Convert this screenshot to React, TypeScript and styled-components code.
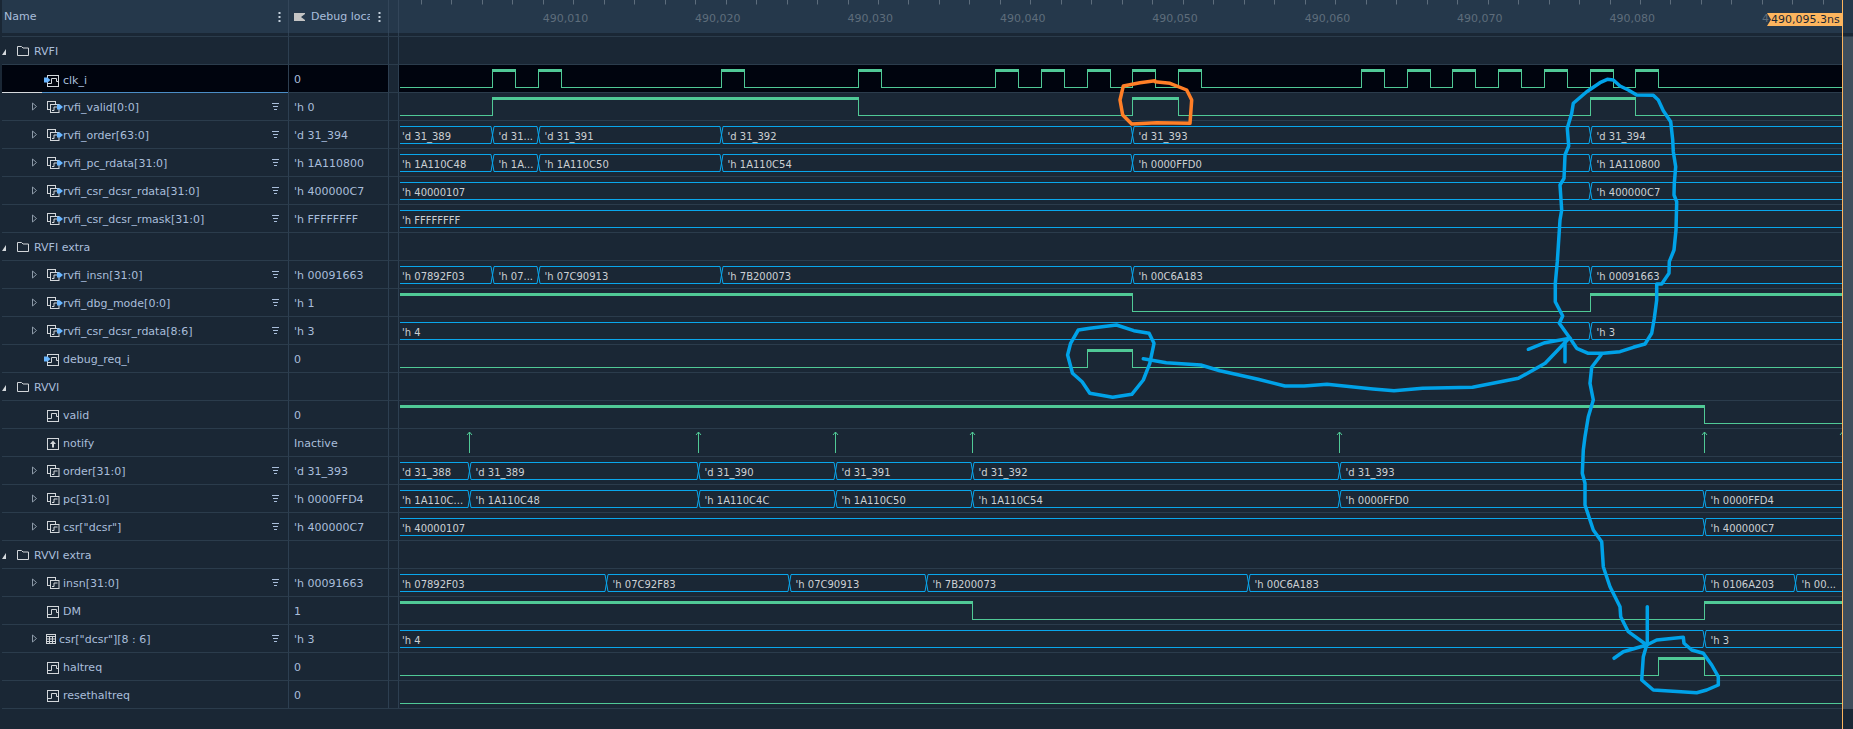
import styled, { createGlobalStyle } from "styled-components";

const GlobalStyle = createGlobalStyle`
  html, body {
    margin: 0;
    padding: 0;
    background: #1a2735;
    overflow: hidden;
  }
`;

const LINE = "#2b3c4c";
const COL = "#2d3f51";
const GREEN = "#50c996";
const BUS = "#09a6ec";
const SCRIBBLE = "#00a2e8";

const Page = styled.div`
  position: relative;
  width: 1853px;
  height: 729px;
  overflow: hidden;
  padding-left: 2px;
  box-sizing: border-box;
  background: #1a2735;
  font-family: "DejaVu Sans", sans-serif;
  font-size: 11px;
  color: #a9bedb;
`;

const Header = styled.div`
  display: flex;
  height: 33px;
  background: #25384b;
`;

const HeaderCell = styled.div<{ $w: number }>`
  display: flex;
  align-items: center;
  flex: none;
  width: ${(p) => p.$w}px;
  box-sizing: border-box;
  border-right: 1px solid #33465a;
`;

const HeaderTitle = styled.span`
  flex: 1;
  padding-left: 2px;
`;

const DebugFlag = styled.svg`
  flex: none;
  margin-left: 5px;
`;

const DebugTitle = styled.span`
  width: 59px;
  margin-left: 6px;
  overflow: hidden;
  white-space: nowrap;
`;

const KebabIcon = styled.svg`
  flex: none;
  margin-left: auto;
  margin-right: 7px;
`;

const Ruler = styled.svg`
  display: block;
  flex: none;
`;

const RulerLabel = styled.text`
  font-family: "DejaVu Sans", sans-serif;
  font-size: 11px;
  fill: #5e6d7b;
`;

const Body = styled.div`
  display: flex;
`;

const Rows = styled.div`
  flex: none;
  width: 1841px;
`;

const ScrollStrip = styled.div`
  flex: none;
  width: 10px;
  height: 672px;
  background: #3f4e5c;
`;

const Row = styled.div<{ $h?: number }>`
  display: flex;
  height: ${(p) => p.$h ?? 28}px;
`;

const NameCell = styled.div<{ $selected?: boolean }>`
  display: flex;
  align-items: center;
  flex: none;
  width: 287px;
  box-sizing: border-box;
  border-right: 1px solid ${COL};
  border-bottom: ${(p) => (p.$selected ? "none" : `1px solid ${LINE}`)};
  background: ${(p) =>
    p.$selected
      ? "linear-gradient(to right, #d6dade 40px, #4b8dc6 40px) bottom / 100% 1px no-repeat, #00040e"
      : "none"};
`;

const ValueCell = styled.div<{ $selected?: boolean }>`
  display: flex;
  align-items: center;
  flex: none;
  width: 100px;
  box-sizing: border-box;
  padding: 2px 0 0 5px;
  border-right: 1px solid ${COL};
  border-bottom: 1px solid ${LINE};
  background: ${(p) => (p.$selected ? "#00040e" : "none")};
  white-space: nowrap;
`;

const GapCell = styled.div`
  flex: none;
  width: 10px;
  box-sizing: border-box;
  border-right: 1px solid ${COL};
  border-bottom: 1px solid ${LINE};
`;

const WaveCell = styled.div<{ $selected?: boolean }>`
  flex: 1;
  box-sizing: border-box;
  border-bottom: 1px solid ${LINE};
  background: ${(p) => (p.$selected ? "#00040e" : "none")};
`;

const WaveSvg = styled.svg`
  display: block;
`;

const BusLabel = styled.text`
  font-family: "DejaVu Sans", sans-serif;
  font-size: 10px;
  fill: #ccd0d4;
`;

const GroupName = styled.span`
  margin-left: 5px;
  padding-top: 2px;
`;

const Caret = styled.svg`
  flex: none;
  margin: 3px 11px 0 0;
`;

const Folder = styled.svg`
  flex: none;
`;

const Chevron = styled.svg`
  flex: none;
  margin-left: 30px;
`;

const SignalIcon = styled.svg`
  flex: none;
  margin-left: 7px;
`;

const SignalName = styled.span`
  flex: 1;
  padding-top: 2px;
  white-space: nowrap;
`;

const FilterIcon = styled.svg`
  flex: none;
  margin-right: 9px;
`;

const Overlay = styled.svg`
  position: absolute;
  left: 0;
  top: 0;
  pointer-events: none;
`;

const CursorLine = styled.div`
  position: absolute;
  left: 1842px;
  top: 0;
  width: 1px;
  height: 729px;
  background: #fdb55e;
`;

const CursorFlag = styled.div`
  position: absolute;
  left: 1767px;
  top: 13px;
  width: 75px;
  height: 13px;
  padding-left: 4px;
  box-sizing: border-box;
  background: #fdb55e;
  clip-path: polygon(0 0, 100% 0, 100% 100%, 0 100%, 4px 50%);
  color: #1a2735;
  line-height: 13px;
  white-space: nowrap;
`;

type Wave =
  | { kind: "bit"; start: 0 | 1; edges: number[] }
  | { kind: "bus"; cross: number[]; labels: string[] }
  | { kind: "arrows"; xs: number[] };

type IconKind = "stackIn" | "stack" | "in" | "pulse" | "event" | "grid";

type RowData =
  | { group: string }
  | { name: string; value: string; icon: IconKind; wave: Wave; selected?: boolean };

const clkRises = [
  492.3, 538.6, 721.3, 858.5, 995.3, 1041.5, 1087.3, 1132.5, 1178.5, 1361, 1407, 1452.5, 1498.5, 1544, 1590.5,
  1635.8,
];
const clkEdges = clkRises.flatMap((x) => [x, x + 23]);
const C1 = [492.5, 538.6, 721.3, 1132.5, 1590.5];

const rows: RowData[] = [
  { group: "RVFI" },
  { name: "clk_i", value: "0", icon: "in", selected: true, wave: { kind: "bit", start: 0, edges: clkEdges } },
  { name: "rvfi_valid[0:0]", value: "'h 0", icon: "stackIn", wave: { kind: "bit", start: 0, edges: [492.3, 858.5, 1132.5, 1178.5, 1590.5, 1635.8] } },
  { name: "rvfi_order[63:0]", value: "'d 31_394", icon: "stackIn", wave: { kind: "bus", cross: C1, labels: ["'d 31_389", "'d 31...", "'d 31_391", "'d 31_392", "'d 31_393", "'d 31_394"] } },
  { name: "rvfi_pc_rdata[31:0]", value: "'h 1A110800", icon: "stackIn", wave: { kind: "bus", cross: C1, labels: ["'h 1A110C48", "'h 1A...", "'h 1A110C50", "'h 1A110C54", "'h 0000FFD0", "'h 1A110800"] } },
  { name: "rvfi_csr_dcsr_rdata[31:0]", value: "'h 400000C7", icon: "stackIn", wave: { kind: "bus", cross: [1590.5], labels: ["'h 40000107", "'h 400000C7"] } },
  { name: "rvfi_csr_dcsr_rmask[31:0]", value: "'h FFFFFFFF", icon: "stackIn", wave: { kind: "bus", cross: [], labels: ["'h FFFFFFFF"] } },
  { group: "RVFI extra" },
  { name: "rvfi_insn[31:0]", value: "'h 00091663", icon: "stackIn", wave: { kind: "bus", cross: C1, labels: ["'h 07892F03", "'h 07...", "'h 07C90913", "'h 7B200073", "'h 00C6A183", "'h 00091663"] } },
  { name: "rvfi_dbg_mode[0:0]", value: "'h 1", icon: "stackIn", wave: { kind: "bit", start: 1, edges: [1132.5, 1590.5] } },
  { name: "rvfi_csr_dcsr_rdata[8:6]", value: "'h 3", icon: "stackIn", wave: { kind: "bus", cross: [1590.5], labels: ["'h 4", "'h 3"] } },
  { name: "debug_req_i", value: "0", icon: "in", wave: { kind: "bit", start: 0, edges: [1087.3, 1132.5] } },
  { group: "RVVI" },
  { name: "valid", value: "0", icon: "pulse", wave: { kind: "bit", start: 1, edges: [1704.3] } },
  { name: "notify", value: "Inactive", icon: "event", wave: { kind: "arrows", xs: [469.4, 698.3, 835.5, 972.4, 1339, 1704.3, 1842] } },
  { name: "order[31:0]", value: "'d 31_393", icon: "stack", wave: { kind: "bus", cross: [469.4, 698.3, 835.5, 972.4, 1339], labels: ["'d 31_388", "'d 31_389", "'d 31_390", "'d 31_391", "'d 31_392", "'d 31_393"] } },
  { name: "pc[31:0]", value: "'h 0000FFD4", icon: "stack", wave: { kind: "bus", cross: [469.4, 698.3, 835.5, 972.4, 1339, 1704.3], labels: ["'h 1A110C...", "'h 1A110C48", "'h 1A110C4C", "'h 1A110C50", "'h 1A110C54", "'h 0000FFD0", "'h 0000FFD4"] } },
  { name: 'csr["dcsr"]', value: "'h 400000C7", icon: "stack", wave: { kind: "bus", cross: [1704.3], labels: ["'h 40000107", "'h 400000C7"] } },
  { group: "RVVI extra" },
  { name: "insn[31:0]", value: "'h 00091663", icon: "stack", wave: { kind: "bus", cross: [606.6, 789.7, 926.5, 1248, 1704.3, 1795.5], labels: ["'h 07892F03", "'h 07C92F83", "'h 07C90913", "'h 7B200073", "'h 00C6A183", "'h 0106A203", "'h 00..."] } },
  { name: "DM", value: "1", icon: "pulse", wave: { kind: "bit", start: 1, edges: [972.4, 1704.3] } },
  { name: 'csr["dcsr"][8 : 6]', value: "'h 3", icon: "grid", wave: { kind: "bus", cross: [1704.3], labels: ["'h 4", "'h 3"] } },
  { name: "haltreq", value: "0", icon: "pulse", wave: { kind: "bit", start: 0, edges: [1658.4, 1704.3] } },
  { name: "resethaltreq", value: "0", icon: "pulse", wave: { kind: "bit", start: 0, edges: [] } },
];

const X0 = 400;
const X1 = 1843;
const snap = (x: number) => Math.floor(x) + 0.5;

function BitWave({ start, edges }: { start: 0 | 1; edges: number[] }) {
  const stops = [X0, ...edges.map(snap), X1];
  const verticals = edges.map(snap);
  return (
    <>
      {stops.slice(0, -1).map((x, i) => {
        const high = (start + i) % 2 === 1;
        return (
          <line
            key={i}
            x1={x - (high && i > 0 ? 0.5 : 0)}
            x2={stops[i + 1] + (high && i + 1 < stops.length - 1 ? 0.5 : 0)}
            y1={high ? 5.5 : 22.5}
            y2={high ? 5.5 : 22.5}
            stroke={GREEN}
            strokeWidth={high ? 3 : 1}
          />
        );
      })}
      {verticals.map((x) => (
        <line key={x} x1={x} x2={x} y1={5} y2={23} stroke={GREEN} strokeWidth={1} />
      ))}
    </>
  );
}

function BusWave({ cross, labels }: { cross: number[]; labels: string[] }) {
  const cs = cross.map(snap);
  const starts = [X0, ...cs.map((c) => c + 1.5)];
  const ends = [...cs.map((c) => c - 1.5), X1];
  return (
    <>
      {starts.map((s, i) => (
        <g key={i} stroke={BUS} strokeWidth={1}>
          <line x1={s} x2={ends[i]} y1={5.5} y2={5.5} />
          <line x1={s} x2={ends[i]} y1={22.5} y2={22.5} />
        </g>
      ))}
      {cs.map((c) => (
        <g key={c} stroke={BUS} strokeWidth={1}>
          <line x1={c - 1.5} x2={c + 1.5} y1={5.5} y2={22.5} />
          <line x1={c - 1.5} x2={c + 1.5} y1={22.5} y2={5.5} />
        </g>
      ))}
      {labels.map((label, i) => (
        <BusLabel key={i} x={i === 0 ? 402 : cs[i - 1] + 6} y={19}>
          {label}
        </BusLabel>
      ))}
    </>
  );
}

function ArrowWave({ xs }: { xs: number[] }) {
  return (
    <>
      {xs.map((x) => {
        const c = snap(x);
        return (
          <g key={x} stroke={GREEN} strokeWidth={1} fill="none">
            <line x1={c} x2={c} y1={3} y2={24} />
            <path d={`M${c - 2.5} 6L${c} 3L${c + 2.5} 6`} />
          </g>
        );
      })}
    </>
  );
}

function WaveView({ wave }: { wave: Wave }) {
  return (
    <WaveSvg width={1444} height={27} viewBox="399 0 1444 27">
      {wave.kind === "bit" && <BitWave start={wave.start} edges={wave.edges} />}
      {wave.kind === "bus" && <BusWave cross={wave.cross} labels={wave.labels} />}
      {wave.kind === "arrows" && <ArrowWave xs={wave.xs} />}
    </WaveSvg>
  );
}

const ICON = "#d2d6da";
const ARROW = "#69b6ff";

function RowIcon({ kind }: { kind: IconKind }) {
  if (kind === "grid") {
    return (
      <SignalIcon width={15} height={15} viewBox="0 0 15 15" fill="none" stroke={ICON}>
        <rect x={2.5} y={3.5} width={9} height={9} />
        <path d="M2.5 5.5H11.5M2.5 8H11.5M2.5 10.5H11.5M5.5 5.5V12.5M8.5 5.5V12.5" />
      </SignalIcon>
    );
  }
  const stacked = kind === "stack" || kind === "stackIn";
  return (
    <SignalIcon width={19} height={15} viewBox="0 0 19 15" fill="none" stroke={ICON}>
      {stacked ? (
        <>
          <rect x={3.5} y={2.5} width={8} height={8} />
          <rect x={6.5} y={5.5} width={8.5} height={8} fill="#1a2735" />
          <path d="M8 11.5H10V8H13.5" />
        </>
      ) : (
        <>
          <rect x={3.5} y={3.5} width={11} height={11} />
          {kind === "event" ? (
            <path d="M9 5.5L12 9H10V12.5H8V9H6Z" fill={ICON} stroke="none" />
          ) : (
            <path d="M4 11.5H7.5V6.5H12.5V9.5H14" />
          )}
        </>
      )}
      {kind === "stackIn" && <path d="M13 5.5H16L19 8L16 10.5H13Z" fill={ARROW} stroke="none" />}
      {kind === "in" && <path d="M0 5.5H3.5L6.5 8L3.5 10.5H0Z" fill={ARROW} stroke="none" />}
    </SignalIcon>
  );
}

function Kebab() {
  return (
    <KebabIcon width={3} height={10} viewBox="0 0 3 10">
      <rect x={0.5} y={0} width={2} height={2} fill="#c4d0dc" />
      <rect x={0.5} y={4} width={2} height={2} fill="#c4d0dc" />
      <rect x={0.5} y={8} width={2} height={2} fill="#c4d0dc" />
    </KebabIcon>
  );
}

const AXIS_ZERO = 1609.5;
const STEP = 30.48;

function TimeRuler() {
  const ticks: number[] = [];
  for (let k = -39; k < 8; k++) ticks.push(Math.round(AXIS_ZERO + k * STEP) + 0.5);
  const labels = [10, 20, 30, 40, 50, 60, 70, 80, 90];
  return (
    <Ruler width={1454} height={33} viewBox="399 0 1454 33">
      {ticks.map((x) => (
        <line key={x} x1={x} x2={x} y1={0} y2={4.5} stroke="#5d6d7c" />
      ))}
      {labels.map((n) => (
        <RulerLabel key={n} x={AXIS_ZERO + ((n - 80) / 10) * 152.4} y={22}>
          {`490,0${n}`}
        </RulerLabel>
      ))}
    </Ruler>
  );
}

// scribble points are read from 3x crops, some are squeezed in x
const trace = (ox: number, oy: number, sx: number, sy: number, pts: number[][]) =>
  pts.map(([x, y]) => `${(ox + x / sx).toFixed(1)},${(oy + y / sy).toFixed(1)}`).join(" ");

const scribbles = [
  trace(1520, 70, 3, 3, [
    [240, 38], [262, 28], [280, 30], [300, 48], [325, 60], [350, 75], [400, 76], [415, 90], [430, 122], [452, 155],
    [458, 210], [460, 245], [467, 290], [463, 340], [462, 375], [470, 395], [468, 480], [462, 540], [448, 575],
    [447, 610], [425, 642], [410, 642], [410, 690], [403, 745], [395, 790], [375, 822], [340, 832], [300, 845],
    [250, 850], [205, 850], [170, 835], [150, 805], [118, 760], [128, 738], [106, 695], [106, 640], [112, 575],
    [120, 450], [125, 420], [120, 345], [132, 325], [135, 255], [146, 228], [142, 175], [155, 130], [160, 100],
    [200, 65], [240, 38],
  ]),
  trace(1520, 70, 3, 3, [[25, 838], [75, 818], [150, 805]]),
  trace(1520, 70, 3, 3, [[135, 876], [135, 815]]),
  trace(1040, 300, 2.613, 3, [
    [200, 75], [130, 85], [100, 90], [80, 130], [72, 165], [85, 220], [110, 245], [130, 280], [190, 292], [240, 283],
    [270, 240], [287, 190], [298, 130], [285, 100], [245, 92], [200, 75],
  ]),
  trace(1040, 300, 2.613, 3, [
    [270, 176], [330, 188], [420, 195], [470, 212], [570, 238], [640, 258], [690, 258], [750, 253], [870, 267],
    [925, 272], [1000, 265], [1130, 262], [1250, 235], [1320, 190], [1380, 118],
  ]),
  trace(1540, 350, 3, 3, [
    [183, 15], [155, 52], [150, 100], [160, 150], [145, 200], [135, 260], [130, 300], [127, 370], [135, 400],
    [135, 465], [160, 540], [185, 575], [190, 650], [210, 710], [240, 770], [242, 800], [265, 845], [320, 885],
  ]),
  trace(1540, 350, 3, 3, [[322, 770], [322, 885]]),
  trace(1540, 350, 3, 3, [[222, 925], [250, 905], [320, 885]]),
  trace(1540, 350, 3, 3, [
    [320, 885], [350, 870], [430, 862], [432, 880], [455, 900], [490, 910], [515, 945], [535, 980], [535, 1005],
    [500, 1020], [470, 1028], [340, 1020], [305, 990], [310, 920], [320, 885],
  ]),
];

const orangeScribble = trace(1000, 50, 3, 3, [
  [465, 92], [420, 98], [370, 108], [360, 150], [368, 195], [395, 222], [470, 218], [570, 220], [575, 150], [560, 120],
  [510, 100], [465, 95],
]);

export default function App() {
  return (
    <Page>
      <GlobalStyle />
      <Header>
        <HeaderCell $w={287}>
          <HeaderTitle>Name</HeaderTitle>
          <Kebab />
        </HeaderCell>
        <HeaderCell $w={100}>
          <DebugFlag width={11} height={8} viewBox="0 0 11 8">
            <path d="M0 0H11V1L7 4L11 7V8H0Z" fill="#c4c4c4" />
          </DebugFlag>
          <DebugTitle>Debug local</DebugTitle>
          <Kebab />
        </HeaderCell>
        <HeaderCell $w={10} />
        <TimeRuler />
      </Header>
      <Row $h={4}>
        <NameCell />
        <ValueCell />
        <GapCell />
        <WaveCell />
      </Row>
      <Body>
        <Rows>
          {rows.map((row, i) =>
            "group" in row ? (
              <Row key={i}>
                <NameCell>
                  <Caret width={4} height={6} viewBox="0 0 4 6">
                    <path d="M4 0V6H0Z" fill="#d4d8dc" />
                  </Caret>
                  <Folder width={12} height={10} viewBox="0 0 12 10" fill="none" stroke={ICON}>
                    <path d="M0.5 9.5V0.5H4.5L6 2H11.5V9.5Z" />
                  </Folder>
                  <GroupName>{row.group}</GroupName>
                </NameCell>
                <ValueCell />
                <GapCell />
                <WaveCell />
              </Row>
            ) : (
              <Row key={i}>
                <NameCell $selected={row.selected}>
                  {row.wave.kind === "bus" || row.icon === "stackIn" ? (
                    <Chevron width={5} height={9} viewBox="0 0 5 9" fill="none" stroke="#8d9aa8">
                      <path d="M0.5 1V8L4.5 4.5Z" />
                    </Chevron>
                  ) : (
                    <Chevron width={5} height={9} viewBox="0 0 5 9" />
                  )}
                  <RowIcon kind={row.icon} />
                  <SignalName>{row.name}</SignalName>
                  {(row.wave.kind === "bus" || row.icon === "stackIn") && (
                    <FilterIcon width={7} height={7} viewBox="0 0 7 7" fill="none" stroke="#a9bedb">
                      <path d="M0 0.5H7M1 3.5H6M2 6.5H5" />
                    </FilterIcon>
                  )}
                </NameCell>
                <ValueCell $selected={row.selected}>{row.value}</ValueCell>
                <GapCell />
                <WaveCell $selected={row.selected}>
                  <WaveView wave={row.wave} />
                </WaveCell>
              </Row>
            )
          )}
        </Rows>
        <ScrollStrip />
      </Body>
      <Overlay width={1853} height={729} viewBox="0 0 1853 729" fill="none" strokeLinejoin="round" strokeLinecap="round">
        {scribbles.map((pts, i) => (
          <polyline key={i} points={pts} stroke={SCRIBBLE} strokeWidth={3.5} />
        ))}
        <polyline points={orangeScribble} stroke="#ff7f27" strokeWidth={3.5} />
      </Overlay>
      <CursorLine />
      <CursorFlag>490,095.3ns</CursorFlag>
    </Page>
  );
}
